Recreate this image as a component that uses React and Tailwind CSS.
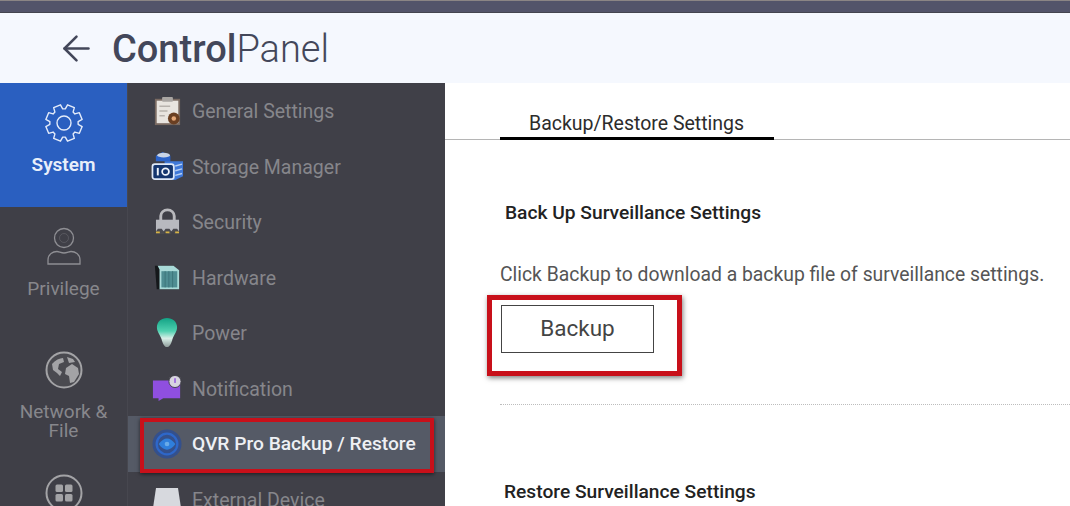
import React from 'react';
import { ArrowLeft } from 'lucide-react';

// outline of the 8 tooth cog used on the System tab
const cogPath = (() => {
  const pts = [];
  for (let i = 0; i < 8; i++) {
    const a = (i * Math.PI) / 4 - Math.PI / 8;
    const steps = [
      [14.2, -0.3],
      [18.5, -0.2],
      [18.5, 0.2],
      [14.2, 0.3],
    ];
    steps.forEach(([r, d]) => {
      pts.push(`${(20 + r * Math.cos(a + d)).toFixed(2)} ${(20 + r * Math.sin(a + d)).toFixed(2)}`);
    });
  }
  return `M${pts.join('L')}Z`;
})();

const CogIcon = () => (
  <svg width="40" height="40" viewBox="0 0 40 40" fill="none" stroke="#e4ecfa" strokeWidth="1.400" strokeLinejoin="round">
    <path d={cogPath} />
    <circle cx="20" cy="20" r="7" />
  </svg>
);

const PrivilegeIcon = () => (
  <svg width="36" height="42" viewBox="0 0 36 42" fill="none" stroke="#8f8f94" strokeWidth="1.300">
    <circle cx="18" cy="12" r="9.500" />
    <circle cx="18" cy="12" r="4.500" strokeWidth="0.300" />
    <path d="M2 38v-4c0-6 5-8.500 9-8.500 2 0 4 1.500 7 1.500s5-1.500 7-1.500c4 0 9 2.500 9 8.500v4z" />
  </svg>
);

const GlobeIcon = () => (
  <svg width="38" height="38" viewBox="0 0 38 38">
    <circle cx="19" cy="19" r="17.500" fill="#4a4a50" stroke="#a3a3a6" strokeWidth="2" />
    <path d="M7 13c3-4 8-6 11-6l1 4-5 2-1 5 4 3-2 4-3-3-4-3zM21 17l6-4 6 4 1 6-5 8-4 1-1-7-4-2zM22 6l6 2 2 3-6 1z" fill="#a3a3a6" />
  </svg>
);

const AppsIcon = () => (
  <svg width="38" height="38" viewBox="0 0 38 38">
    <circle cx="19" cy="19" r="17.500" fill="none" stroke="#a3a3a6" strokeWidth="2" />
    <rect x="10.500" y="10.500" width="7.500" height="7.500" rx="1.500" fill="#a3a3a6" />
    <rect x="20" y="10.500" width="7.500" height="7.500" rx="1.500" fill="#a3a3a6" />
    <rect x="10.500" y="20" width="7.500" height="7.500" rx="1.500" fill="#a3a3a6" />
    <rect x="20" y="20" width="7.500" height="7.500" rx="1.500" fill="#a3a3a6" />
  </svg>
);

const GeneralIcon = () => (
  <svg width="27" height="30" viewBox="0 0 30 32" preserveAspectRatio="none">
    <rect x="1" y="3" width="28" height="28" fill="#7a6a62" />
    <rect x="3" y="5" width="24" height="24" fill="#e8e4df" />
    <rect x="9" y="1" width="12" height="5" rx="1" fill="#a9a5a2" />
    <path d="M6 11h12M6 16h9M6 21h6" stroke="#b7b2ad" strokeWidth="1.500" />
    <circle cx="22" cy="24" r="6.500" fill="#6a3f22" />
    <circle cx="22" cy="24" r="2.500" fill="#e6a877" />
  </svg>
);

const StorageIcon = () => (
  <svg width="33" height="32" viewBox="0 0 34 34" preserveAspectRatio="none">
    <path d="M5 6l7-4 8 4v6H5z" fill="#2b63c9" />
    <ellipse cx="13" cy="5.500" rx="6.500" ry="2.500" fill="#c9d4e6" />
    <path d="M14 12h19v16l-8 4H14z" fill="#3f78d8" />
    <path d="M25 17l7-2M25 22l7-2M25 27l7-2" stroke="#b9d0f2" strokeWidth="1.500" />
    <rect x="1.500" y="15" width="22" height="16" rx="2.500" fill="#14356e" stroke="#dfe9f8" strokeWidth="1.800" />
    <rect x="6" y="19" width="2" height="8" fill="#f0f5fc" />
    <circle cx="15" cy="23" r="3.500" fill="none" stroke="#f0f5fc" strokeWidth="1.800" />
  </svg>
);

const LockIcon = () => (
  <svg width="25" height="27" viewBox="0 0 26 30" preserveAspectRatio="none">
    <path d="M6 14V9a7 7 0 0 1 14 0v5" fill="none" stroke="#b9b9bd" strokeWidth="3" />
    <rect x="1" y="13" width="24" height="13" fill="#b8b9bf" />
    <path d="M1 26l2-3h4l2 3 2-3h4l2 3 2-3h4l2 3v3h-5v-2h-3v2h-4v-2h-3v2H1z" fill="#4a4a50" />
    <path d="M1 27h4M11 27h4M21 27h4" stroke="#d8b445" strokeWidth="2" />
  </svg>
);

const HardwareIcon = () => (
  <svg width="28" height="27" viewBox="0 0 30 30" preserveAspectRatio="none">
    <path d="M2 2h20l6 6v20H4z" fill="#15181b" />
    <path d="M5 2h17l6 5v21H7V6z" fill="#a9dad8" />
    <rect x="9" y="8" width="17" height="18" fill="#4f8d92" />
    <path d="M13 8v18M17 8v18M21 8v18" stroke="#3c7479" strokeWidth="1" />
  </svg>
);

const PowerIcon = () => (
  <svg width="22" height="31" viewBox="0 0 24 34" preserveAspectRatio="none">
    <defs>
      <linearGradient id="bulb" x1="0" y1="0" x2="0" y2="1">
        <stop offset="0" stopColor="#12a285" />
        <stop offset="0.45" stopColor="#4fd1b0" />
        <stop offset="0.7" stopColor="#d9efe8" />
        <stop offset="1" stopColor="#8f9c9a" />
      </linearGradient>
    </defs>
    <path d="M12 1c6 0 11 4 11 10 0 5-3 8-5 13-1 4-3 9-6 9s-5-5-6-9C4 19 1 16 1 11 1 5 6 1 12 1z" fill="url(#bulb)" />
  </svg>
);

const NotificationIcon = () => (
  <svg width="30" height="26" viewBox="0 0 32 28" preserveAspectRatio="none">
    <path d="M1 6h29v19H12l-5 3v-3H1z" fill="#8f4fe0" />
    <circle cx="24.500" cy="7" r="6.500" fill="#d8d4e0" stroke="#404048" strokeWidth="1" />
    <rect x="23.800" y="3.500" width="1.500" height="5" fill="#8f4fe0" />
  </svg>
);

const QvrIcon = () => (
  <svg width="30" height="30" viewBox="0 0 32 32">
    <circle cx="16" cy="16" r="15.500" fill="#34508c" />
    <circle cx="16" cy="16" r="11" fill="none" stroke="#2e67c9" strokeWidth="2.500" />
    <path d="M7 16c3-4 6-6 9-6s6 2 9 6c-3 4-6 6-9 6s-6-2-9-6z" fill="#2f7fdc" />
    <circle cx="16" cy="16" r="2.500" fill="#69abe8" />
  </svg>
);

const ExternalIcon = () => (
  <svg width="30" height="24" viewBox="0 0 30 24">
    <path d="M4 1h22l3 20H1z" fill="#d7d9de" />
    <rect x="1" y="20" width="28" height="4" fill="#8a8c92" />
  </svg>
);

const railItems = [
  { label: ['System'], icon: <CogIcon />, active: true },
  { label: ['Privilege'], icon: <PrivilegeIcon /> },
  { label: ['Network &', 'File'], icon: <GlobeIcon /> },
  { label: [], icon: <AppsIcon /> },
];

const menuItems = [
  { label: 'General Settings', icon: <GeneralIcon /> },
  { label: 'Storage Manager', icon: <StorageIcon /> },
  { label: 'Security', icon: <LockIcon /> },
  { label: 'Hardware', icon: <HardwareIcon /> },
  { label: 'Power', icon: <PowerIcon /> },
  { label: 'Notification', icon: <NotificationIcon /> },
  { label: 'QVR Pro Backup / Restore', icon: <QvrIcon />, active: true },
  { label: 'External Device', icon: <ExternalIcon /> },
];

const App = () => {
  return (
    <div className="h-[506px] w-[1070px] overflow-hidden flex flex-col bg-white font-['Roboto',sans-serif]">
      {/* Window title strip */}
      <div className="h-[13px] shrink-0 bg-[#53546a] border-t border-t-[#8b8585] border-b border-b-[#44454f]"></div>

      {/* Header */}
      <header className="h-[70px] shrink-0 bg-[#f5f8fe] flex items-center pl-[56px]">
        <ArrowLeft size={41} strokeWidth={1.5} color="#43475a" />
        <h1 className="ml-[15px] mt-[2px] text-[38px] leading-none text-[#43475a] font-medium">
          Control<span className="font-light">Panel</span>
        </h1>
      </header>

      <div className="flex-1 flex min-h-0">
        {/* Left rail */}
        <nav className="w-[128px] shrink-0 bg-[#3f3f47] flex flex-col overflow-hidden border-r border-r-[#47474f]">
          {railItems.map((item, i) => (
            <div
              key={i}
              className={`shrink-0 flex flex-col items-center pt-[19px] ${item.active ? 'h-[124px] bg-[#2a5fc0]' : 'h-[123px]'}`}
            >
              <div className="h-[42px] flex items-center justify-center blur-[0.4px]">{item.icon}</div>
              <div
                className={`mt-[11px] text-center text-[19px] leading-[19px] whitespace-nowrap ${
                  item.active ? 'text-[#e8effa] font-semibold' : 'text-[#87878c]'
                }`}
              >
                {item.label.map((line) => (
                  <div key={line}>{line}</div>
                ))}
              </div>
            </div>
          ))}
        </nav>

        {/* Sub menu */}
        <aside className="w-[317px] shrink-0 bg-[#404048] flex flex-col overflow-hidden">
          {menuItems.map((item) => (
            <div
              key={item.label}
              className={`relative h-[55.500px] shrink-0 flex items-center pl-[20px] ${item.active ? 'bg-[#555a66]' : ''}`}
            >
              <div className="w-[38px] mr-[6px] shrink-0 flex items-center justify-center blur-[0.5px]">{item.icon}</div>
              <span
                className={`pt-[2px] whitespace-nowrap ${
                  item.active ? 'text-[19.200px] text-[#eef0f4] font-medium' : 'text-[19.500px] text-[#86868b]'
                }`}
              >
                {item.label}
              </span>
              {item.active && (
                <div className="absolute left-[12px] right-[11px] top-[2px] -bottom-[1px] border-[4px] border-[#c8101a] shadow-[0_1px_4px_rgba(0,0,0,0.6)]"></div>
              )}
            </div>
          ))}
        </aside>

        {/* Content */}
        <main className="flex-1 min-w-0">
          <div className="h-[57px] border-b border-b-[#b5b5b5] pl-[55px] flex items-end">
            <div className="w-[274px] h-[57px] border-b-[3px] border-b-black -mb-[1px] pl-[29px] pt-[29px] text-[19.500px] leading-[24px] text-[#2c2c2c] whitespace-nowrap">
              Backup/Restore Settings
            </div>
          </div>

          <div className="pl-[55px]">
            <h2 className="mt-[61px] pl-[5px] text-[19.200px] leading-[24px] font-medium text-[#222] whitespace-nowrap">
              Back Up Surveillance Settings
            </h2>
            <p className="mt-[38px] text-[19.350px] leading-[24px] text-[#555] whitespace-nowrap">
              Click Backup to download a backup file of surveillance settings.
            </p>

            <div className="relative mt-[18px] ml-[1px] w-[153px]">
              <button className="w-[153px] h-[48px] border border-[#444] bg-white text-[22.500px] text-[#444]">Backup</button>
              <div className="absolute -left-[14px] -top-[10px] w-[195px] h-[81px] border-[5px] border-[#c8101a] shadow-[1px_2px_5px_rgba(0,0,0,0.5)]"></div>
            </div>

            <div className="mt-[51px] border-t border-dotted border-t-[#bdbdbd]"></div>

            <h2 className="mt-[75px] pl-[4px] text-[19.200px] leading-[24px] font-medium text-[#222] whitespace-nowrap">
              Restore Surveillance Settings
            </h2>
          </div>
        </main>
      </div>
    </div>
  );
};

export default App;
